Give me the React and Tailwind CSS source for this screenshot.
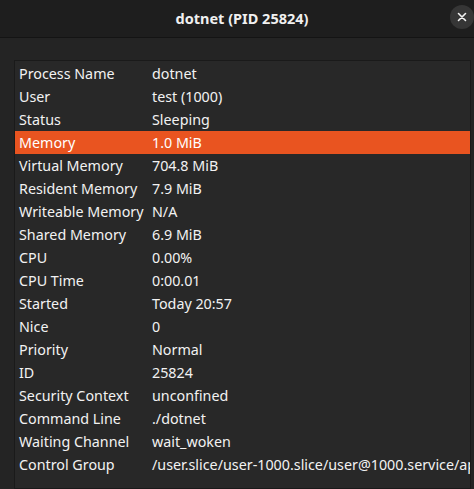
import React from "react";

const rows = [
  ["Process Name", "dotnet"],
  ["User", "test (1000)"],
  ["Status", "Sleeping"],
  ["Memory", "1.0 MiB"],
  ["Virtual Memory", "704.8 MiB"],
  ["Resident Memory", "7.9 MiB"],
  ["Writeable Memory", "N/A"],
  ["Shared Memory", "6.9 MiB"],
  ["CPU", "0.00%"],
  ["CPU Time", "0:00.01"],
  ["Started", "Today 20:57"],
  ["Nice", "0"],
  ["Priority", "Normal"],
  ["ID", "25824"],
  ["Security Context", "unconfined"],
  ["Command Line", "./dotnet"],
  ["Waiting Channel", "wait_woken"],
  ["Control Group", "/user.slice/user-1000.slice/user@1000.service/app.slice"],
];

export default function App() {
  return (
    <div
      className="w-[474px] h-[489px] overflow-hidden bg-[#242424] flex flex-col text-[#f2f2f2]"
      style={{ fontFamily: '"Noto Sans", "Open Sans", sans-serif' }}
    >
      <div className="h-[38px] shrink-0 bg-[#1e1e1e] border-b border-[#141414] flex items-center justify-center relative">
        <span className="text-[14.5px] font-bold text-[#f0f0f0] ml-[10px]">dotnet (PID 25824)</span>
        <div className="absolute right-[0px] top-[5px] w-[24px] h-[24px] rounded-full bg-[#363636] flex items-center justify-center">
          <svg width="10" height="10" viewBox="0 0 10 10">
            <path d="M1.5 1.5 L8.5 8.5 M8.5 1.5 L1.5 8.5" stroke="#f2f2f2" strokeWidth="1.6" strokeLinecap="round" />
          </svg>
        </div>
      </div>
      <div className="flex-1 pt-[22px] pl-[14px] pr-[3px]">
        <div className="h-full bg-[#282828] border border-[#1a1a1a] pt-[1px] overflow-hidden">
          {rows.map(([k, v]) => {
            const sel = k === "Memory";
            return (
              <div
                key={k}
                className={`h-[23px] flex items-center whitespace-nowrap text-[14.3px] ${sel ? "bg-[#e95420] text-white" : ""}`}
              >
                <span className="w-[137px] shrink-0 pl-[4px]">{k}</span>
                <span>{v}</span>
              </div>
            );
          })}
        </div>
      </div>
    </div>
  );
}
